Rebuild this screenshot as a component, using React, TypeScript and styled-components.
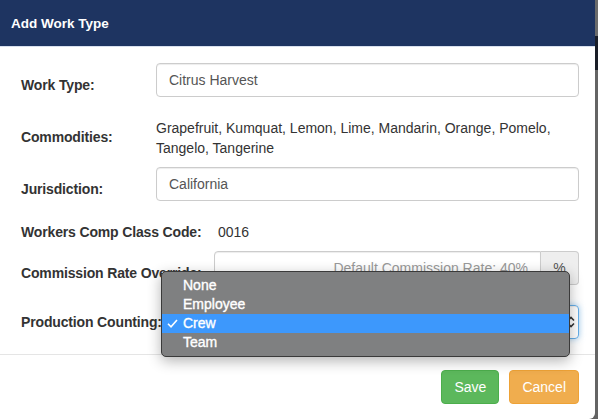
import styled, { createGlobalStyle } from 'styled-components';

const GlobalStyle = createGlobalStyle`
  html, body {
    margin: 0;
    padding: 0;
  }

  body {
    font-family: "Liberation Sans", Arial, sans-serif;
    background: #616161;
    overflow: hidden;
  }
`;

const Page = styled.div`
  display: flex;
  width: 598px;
  height: 419px;
  overflow: hidden;
`;

const Modal = styled.div`
  width: 595px;
  flex-shrink: 0;
  background: #fff;
  border-radius: 0 0 6px 0;
  display: flex;
  flex-direction: column;
`;

const Backdrop = styled.div`
  flex: 1;
  background: linear-gradient(
    to bottom,
    #6b6b6b 0,
    #6b6b6b 36px,
    #1a1e28 36px,
    #1a1e28 70px,
    #646464 70px
  );
`;

const Header = styled.header`
  height: 46px;
  background: #1e3461;
  border-bottom: 1px solid #d8e0ee;
  padding-left: 11px;
  display: flex;
  align-items: center;
`;

const Title = styled.h4`
  margin: 0;
  color: #fff;
  font-size: 13.5px;
  font-weight: 700;
`;

const Body = styled.div`
  padding: 16px 16px 15px 21px;
  display: flex;
  flex-direction: column;
  border-bottom: 1px solid #e5e5e5;
`;

const Row = styled.div<{ $gap?: number }>`
  display: flex;
  align-items: flex-start;
  position: relative;
  margin-top: ${p => p.$gap ?? 0}px;
`;

const Label = styled.label<{ $width: number; $pad: number }>`
  width: ${p => p.$width}px;
  flex-shrink: 0;
  padding-top: ${p => p.$pad}px;
  font-size: 14px;
  font-weight: 700;
  line-height: 20px;
  letter-spacing: -0.15px;
  color: #333;
  white-space: nowrap;
`;

const Static = styled.div`
  flex: 1;
  font-size: 14px;
  line-height: 20px;
  color: #333;
`;

const Input = styled.input`
  flex: 1;
  min-width: 0;
  height: 34px;
  box-sizing: border-box;
  padding: 6px 12px;
  border: 1px solid #ccc;
  border-radius: 4px;
  box-shadow: inset 0 1px 1px rgba(0, 0, 0, 0.075);
  font-family: inherit;
  font-size: 14px;
  color: #555;
  outline: none;
`;

const InputGroup = styled.div`
  flex: 1;
  display: flex;
`;

const RateInput = styled(Input)`
  border-radius: 4px 0 0 4px;
  text-align: right;

  &::placeholder {
    color: #999;
  }
`;

const Addon = styled.span`
  width: 38px;
  height: 34px;
  box-sizing: border-box;
  display: flex;
  align-items: center;
  justify-content: center;
  background: #eee;
  border: 1px solid #ccc;
  border-left: 0;
  border-radius: 0 4px 4px 0;
  font-size: 14px;
  color: #555;
`;

const SelectBox = styled.div`
  flex: 1;
  height: 34px;
  box-sizing: border-box;
  padding: 6px 3px 6px 12px;
  display: flex;
  align-items: center;
  justify-content: space-between;
  border: 1px solid #66afe9;
  border-radius: 4px;
  box-shadow: inset 0 1px 1px rgba(0, 0, 0, 0.075), 0 0 6px rgba(102, 175, 233, 0.6);
  font-size: 14px;
  color: #555;
`;

const Menu = styled.ul`
  position: absolute;
  left: 140px;
  top: -34px;
  width: 409px;
  box-sizing: border-box;
  margin: 0;
  padding: 4px 0;
  list-style: none;
  background: #7f8081;
  border: 1px solid #3a3a3a;
  border-radius: 5px;
  box-shadow: 0 4px 14px rgba(0, 0, 0, 0.3);
  z-index: 10;
`;

const MenuItem = styled.li<{ $active?: boolean }>`
  position: relative;
  height: 19px;
  line-height: 19px;
  padding-left: 21px;
  font-size: 14px;
  color: #fff;
  -webkit-text-stroke: 0.35px #fff;
  background: ${p => (p.$active ? '#3d98fc' : 'transparent')};

  svg {
    position: absolute;
    left: 5px;
    top: 5px;
  }
`;

const Footer = styled.footer`
  padding: 15px 16px;
  display: flex;
  justify-content: flex-end;
  gap: 10px;
`;

const Button = styled.button<{ $variant: 'success' | 'warning' }>`
  height: 34px;
  padding: 6px 12px;
  border-radius: 4px;
  font-family: inherit;
  font-size: 14px;
  color: #fff;
  border: 1px solid ${p => (p.$variant === 'success' ? '#4cae4c' : '#eea236')};
  background: ${p => (p.$variant === 'success' ? '#5cb85c' : '#f0ad4e')};
`;

const options = ['None', 'Employee', 'Crew', 'Team'];

const App = () => {
  return (
    <Page>
      <GlobalStyle />
      <Modal>
        <Header>
          <Title>Add Work Type</Title>
        </Header>
        <Body>
          <Row>
            <Label $width={135} $pad={12}>Work Type:</Label>
            <Input readOnly value='Citrus Harvest' />
          </Row>
          <Row $gap={21}>
            <Label $width={135} $pad={9}>Commodities:</Label>
            <Static>Grapefruit, Kumquat, Lemon, Lime, Mandarin, Orange, Pomelo, Tangelo, Tangerine</Static>
          </Row>
          <Row $gap={9}>
            <Label $width={135} $pad={12}>Jurisdiction:</Label>
            <Input readOnly value='California' />
          </Row>
          <Row $gap={21}>
            <Label $width={197} $pad={0}>Workers Comp Class Code:</Label>
            <Static>0016</Static>
          </Row>
          <Row $gap={9}>
            <Label $width={193} $pad={12}>Commission Rate Override:</Label>
            <InputGroup>
              <RateInput readOnly placeholder='Default Commission Rate: 40%' />
              <Addon>%</Addon>
            </InputGroup>
          </Row>
          <Row $gap={20}>
            <Label $width={147} $pad={7}>Production Counting:</Label>
            <SelectBox>
              <span>Crew</span>
              <svg width='8' height='12' viewBox='0 0 8 12'>
                <path d='M1 4.5 L4 1.5 L7 4.5 M1 7.5 L4 10.5 L7 7.5' fill='none' stroke='#333' strokeWidth='1.6' />
              </svg>
            </SelectBox>
            <Menu>
              {options.map(o => (
                <MenuItem key={o} $active={o === 'Crew'}>
                  {o === 'Crew' && (
                    <svg width='11' height='9' viewBox='0 0 11 9'>
                      <path d='M1 4.8 L4 7.8 L10 1' fill='none' stroke='#fff' strokeWidth='1.6' />
                    </svg>
                  )}
                  {o}
                </MenuItem>
              ))}
            </Menu>
          </Row>
        </Body>
        <Footer>
          <Button $variant='success'>Save</Button>
          <Button $variant='warning'>Cancel</Button>
        </Footer>
      </Modal>
      <Backdrop />
    </Page>
  );
};

export default App;
